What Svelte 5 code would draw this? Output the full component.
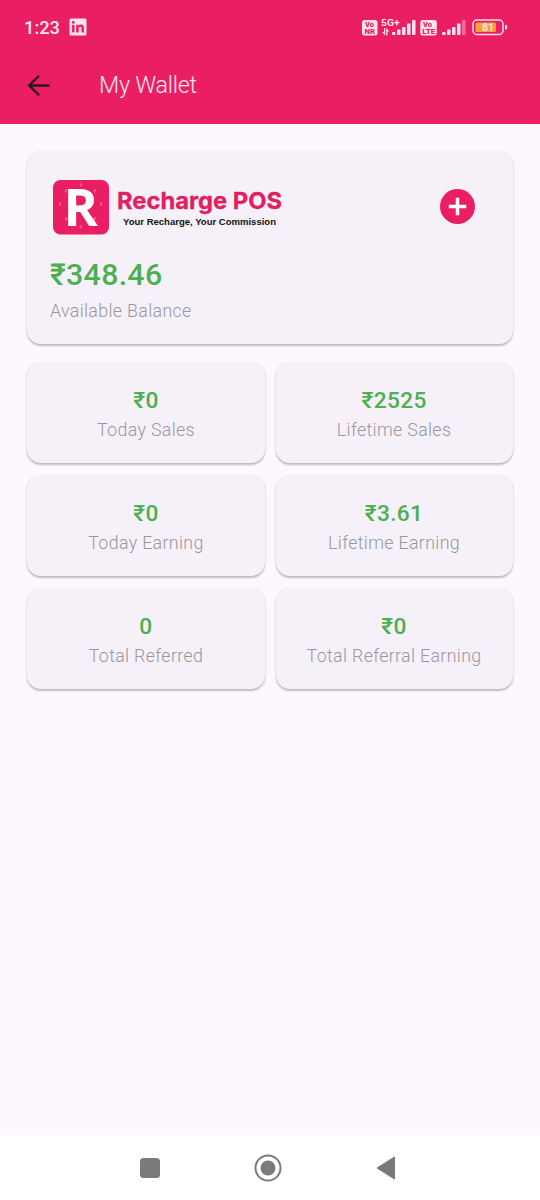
<script>
  const stats = [
    { value: "₹0", label: "Today Sales" },
    { value: "₹2525", label: "Lifetime Sales" },
    { value: "₹0", label: "Today Earning" },
    { value: "₹3.61", label: "Lifetime Earning" },
    { value: "0", label: "Total Referred" },
    { value: "₹0", label: "Total Referral Earning" },
  ];

  // small rupee marks around the logo letter
  const marks = [
    [29.5, 9], [15, 15], [43.5, 15], [9, 28], [50, 28], [15, 43], [43.5, 43], [29.5, 51],
  ];
</script>

<div class="screen">
  <header>
    <div class="status">
      <span class="time">1:23</span>
      <svg class="linkedin" width="18" height="18" viewBox="0 0 18 18">
        <rect width="17" height="17" x=".5" y=".5" rx="1.5" fill="#ffe3ef" />
        <g fill="#e91e63">
          <circle cx="4.3" cy="4.4" r="1.4" />
          <rect x="3.1" y="6.8" width="2.4" height="7.6" />
          <path d="M7.2 6.8h2.3v1.1c.5-.8 1.4-1.3 2.5-1.3 2.3 0 2.9 1.5 2.9 3.6v4.2h-2.4v-3.8c0-1.1-.2-1.9-1.3-1.9s-1.5.8-1.5 1.9v3.8H7.2z" />
        </g>
      </svg>
      <svg class="signals" width="148" height="24" viewBox="0 0 148 24" fill="#ffe3ef">
        <rect x="2" y="5" width="15.5" height="15.5" rx="2.5" />
        <g class="tiny" fill="#e91e63">
          <text x="5" y="11.8" textLength="9" lengthAdjust="spacingAndGlyphs">Vo</text>
          <text x="4.5" y="18.5" textLength="10.5" lengthAdjust="spacingAndGlyphs">NR</text>
        </g>
        <text class="net" x="21" y="11" textLength="18.5" lengthAdjust="spacingAndGlyphs">5G+</text>
        <path d="M24 13v4h-2l3.200 3.500V13zM26.200 20.500V13l3.200 3.500h-2v4z" />
        <rect x="32" y="17" width="3.5" height="3" rx=".7" />
        <rect x="37" y="14.5" width="3.5" height="5.5" rx=".7" />
        <rect x="42" y="12" width="3.5" height="8" rx=".7" />
        <rect x="47" y="8.5" width="3.5" height="11.5" rx=".7" />
        <rect x="52" y="5" width="3.5" height="15" rx=".7" />
        <rect x="60.3" y="5" width="16.5" height="15.5" rx="2.5" />
        <g class="tiny" fill="#e91e63">
          <text x="63" y="11.8" textLength="9" lengthAdjust="spacingAndGlyphs">Vo</text>
          <text x="62.3" y="18.5" textLength="13" lengthAdjust="spacingAndGlyphs">LTE</text>
        </g>
        <rect x="82" y="17" width="3.5" height="3" rx=".7" />
        <rect x="87" y="14.5" width="3.5" height="5.5" rx=".7" />
        <rect x="92" y="12" width="3.5" height="8" rx=".7" />
        <rect x="97" y="8.5" width="3.5" height="11.5" rx=".7" />
        <rect x="102" y="5" width="3.5" height="15" rx=".7" opacity=".4" />
        <rect x="113" y="5" width="30" height="14.5" rx="4" fill="none" stroke="#ffe3ef" stroke-width="1.5" />
        <rect x="115.5" y="7.5" width="20.5" height="9.5" rx="1.5" fill="#f5a039" />
        <path d="M145 10h1a1.2 1.2 0 0 1 1.2 1.2v2a1.2 1.2 0 0 1-1.2 1.3h-1z" />
        <text class="charge" x="128" y="16.3" text-anchor="middle">81</text>
      </svg>
    </div>
    <div class="appbar">
      <svg width="24" height="24" viewBox="0 0 24 24" fill="none" stroke="#2b1720" stroke-width="2.3">
        <path d="M23.7 11.5h-20M13 1.7l-9.8 9.8 9.8 9.8" />
      </svg>
      <h1>My Wallet</h1>
    </div>
  </header>

  <main>
    <section class="card wallet">
      <div class="top">
        <svg width="240" height="60" viewBox="0 0 240 60">
          <rect x="3" y="2" width="56" height="54.5" rx="7.5" fill="#e91e63" />
          <g class="mark">
            {#each marks as [x, y]}
              <text {x} {y}>₹</text>
            {/each}
          </g>
          <text class="letter" x="13.5" y="48.3" textLength="34.5" lengthAdjust="spacingAndGlyphs">R</text>
          <text class="brand" x="67" y="30.5" textLength="165" lengthAdjust="spacingAndGlyphs">Recharge POS</text>
          <text class="slogan" x="73" y="47.3" textLength="153" lengthAdjust="spacingAndGlyphs">Your Recharge, Your Commission</text>
        </svg>
        <button aria-label="Add money">
          <svg width="35" height="35" viewBox="0 0 34 34">
            <circle cx="17" cy="17" r="17" fill="#e91e63" />
            <path d="M17 8.5v17M8.5 17h17" stroke="#fff" stroke-width="3.4" />
          </svg>
        </button>
      </div>
      <div class="balance">₹348.46</div>
      <div class="label">Available Balance</div>
    </section>

    <section class="grid">
      {#each stats as stat}
        <div class="card stat">
          <div class="value">{stat.value}</div>
          <div class="label">{stat.label}</div>
        </div>
      {/each}
    </section>
  </main>

  <nav>
    <svg width="20" height="20" viewBox="0 0 20 20">
      <rect width="20" height="20" rx="3.5" fill="#7a7a7a" />
    </svg>
    <svg width="28" height="28" viewBox="0 0 28 28">
      <circle cx="14" cy="14" r="12.5" fill="none" stroke="#7a7a7a" stroke-width="2" />
      <circle cx="14" cy="14" r="7.5" fill="#7a7a7a" />
    </svg>
    <svg width="20" height="24" viewBox="0 0 20 24">
      <path d="M18.5 1v22L1 12z" fill="#7a7a7a" stroke="#7a7a7a" stroke-linejoin="round" />
    </svg>
  </nav>
</div>

<style>
  :global(body) {
    margin: 0;
  }

  .screen {
    display: flex;
    flex-direction: column;
    width: 540px;
    height: 1200px;
    background: #fef7ff;
    font-family: Roboto, sans-serif;
  }

  header {
    height: 124px;
    background: #e91e63;
    color: #ffe9f1;
  }

  .status {
    display: flex;
    align-items: center;
    height: 54px;
    padding: 0 32px 0 24px;
  }

  .time {
    width: 45px;
    padding-top: 1px;
    font-size: 18.3px;
    font-weight: 500;
  }

  .signals {
    margin-left: auto;
  }

  .tiny {
    font-size: 7px;
    font-weight: 900;
  }

  .net {
    font-size: 9.8px;
    font-weight: 700;
  }

  .charge {
    font-size: 10.5px;
    font-weight: 700;
  }

  .appbar {
    display: flex;
    align-items: center;
    gap: 49px;
    height: 63px;
    padding-left: 26px;
  }

  h1 {
    margin: -2px 0 0;
    font-size: 23.3px;
    font-weight: 300;
    letter-spacing: -0.25px;
  }

  main {
    flex: 1;
    padding: 27px 27.4px 0;
  }

  .card {
    box-sizing: border-box;
    background: #f6f1f9;
    border-radius: 14px;
    box-shadow: 0 1.5px 2px rgba(0, 0, 0, 0.22), 0 1px 3px rgba(0, 0, 0, 0.06);
  }

  .wallet {
    height: 193px;
    padding: 27px 38px 0 22.6px;
  }

  .top {
    display: flex;
    justify-content: space-between;
    height: 60px;
  }

  button {
    height: 35px;
    margin-top: 11px;
    padding: 0;
    border: 0;
    background: none;
  }

  .balance {
    margin-top: 19px;
    font-size: 30.3px;
    line-height: 36px;
    font-weight: 500;
    letter-spacing: 0.3px;
    color: #4caf50;
  }

  .label {
    font-size: 17.8px;
    line-height: 22px;
    font-weight: 300;
    letter-spacing: 0.35px;
    color: #99969d;
  }

  .wallet .label {
    margin-top: 7px;
  }

  .grid {
    display: grid;
    grid-template-columns: 1fr 1fr;
    gap: 12px 11px;
    margin-top: 18px;
  }

  .stat {
    height: 101px;
    padding-top: 25px;
    text-align: center;
  }

  .value {
    font-size: 22.7px;
    line-height: 27px;
    font-weight: 500;
    letter-spacing: 0.35px;
    color: #4caf50;
  }

  .stat .label {
    margin-top: 5px;
  }

  nav {
    display: flex;
    align-items: center;
    justify-content: space-between;
    box-sizing: border-box;
    height: 65px;
    padding: 0 144px 0 140px;
    background: #fff;
  }

  .letter {
    font-family: "Open Sans", sans-serif;
    font-size: 52px;
    font-weight: 700;
    fill: #fff;
  }

  .mark text {
    font-size: 5px;
    fill: #f78db0;
  }

  .brand {
    font-family: Inter, sans-serif;
    font-size: 23.5px;
    font-weight: 700;
    fill: #e0205f;
    stroke: #e0205f;
    stroke-width: 0.3px;
  }

  .slogan {
    font-family: "Liberation Sans", sans-serif;
    font-size: 9.7px;
    font-weight: 700;
    fill: #111;
  }
</style>
